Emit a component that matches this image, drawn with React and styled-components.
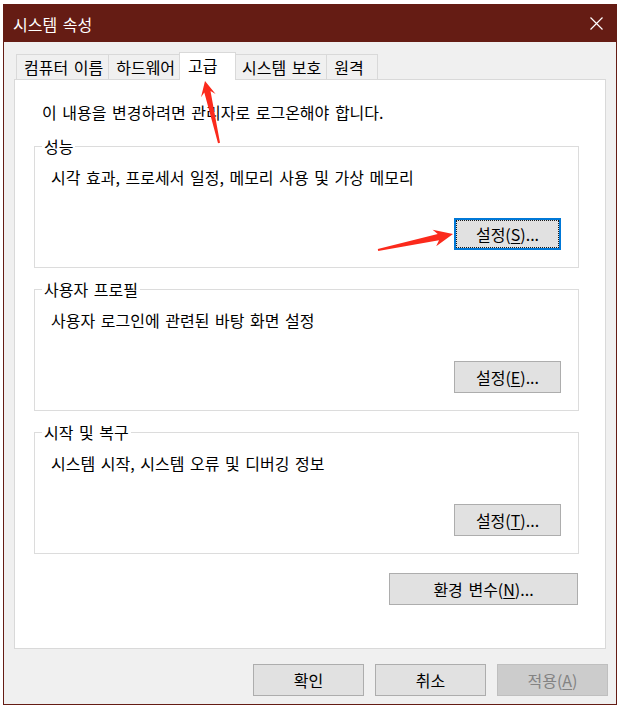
import React from 'react';
import styled, { createGlobalStyle, css } from 'styled-components';

const GlobalStyle = createGlobalStyle`
  html, body {
    margin: 0;
    padding: 0;
    background: #ffffff;
  }
  body {
    font-family: "Noto Sans CJK KR", "Noto Sans", sans-serif;
    font-size: 16px;
    color: #000000;
  }
`;

const TITLE_RED = '#651c14';

// Window frame
const Window = styled.div`
  box-sizing: border-box;
  width: 614px;
  margin: 4px 0 0 3px;
  border: 1px solid ${TITLE_RED};
  background: #f0f0f0;
`;

const TitleBar = styled.div`
  height: 37px;
  background: ${TITLE_RED};
  color: #ffffff;
  display: flex;
  align-items: center;
  justify-content: space-between;
  padding: 0 13px 0 9px;
  line-height: 20px;
  word-spacing: 2px;
`;

const CloseButton = styled.svg`
  width: 13px;
  height: 13px;
  display: block;
`;

const Body = styled.div`
  padding: 10px 10px 8px 10px;
`;

// Tabs
const TabRow = styled.div`
  display: flex;
  align-items: flex-end;
  height: 27px;
  margin-left: 2px;
  position: relative;
  z-index: 1;
`;

const Tab = styled.div`
  box-sizing: border-box;
  height: 25px;
  min-width: 52px;
  display: flex;
  align-items: center;
  padding: 0 5px 1px 7px;
  margin-left: -1px;
  border: 1px solid #d9d9d9;
  border-bottom: none;
  background: #f0f0f0;
  line-height: 20px;
  word-spacing: 2px;
  white-space: nowrap;

  &:first-child {
    margin-left: 0;
  }

  ${({ $active }) =>
    $active &&
    css`
      height: 28px;
      min-width: 57px;
      margin: 0 -1px -1px -2px;
      padding: 0 8px 3px 8px;
      background: #ffffff;
      position: relative;
      z-index: 2;
    `}
`;

const Panel = styled.div`
  box-sizing: border-box;
  height: 570px;
  background: #ffffff;
  border: 1px solid #d9d9d9;
  padding: 22px 26px 0 19px;
  display: flex;
  flex-direction: column;
`;

const Text = styled.div`
  line-height: 20px;
  word-spacing: 2px;
  white-space: nowrap;
  padding-left: ${({ $indent }) => $indent || 0}px;
`;

// Group box
const Group = styled.div`
  position: relative;
  border: 1px solid #dcdcdc;
  margin-top: ${({ $first }) => ($first ? 24 : 21)}px;
  padding: 20px 17px 17px 16px;
  display: flex;
  flex-direction: column;
`;

const GroupLabel = styled.span`
  position: absolute;
  top: -11px;
  left: 7px;
  padding: 0 2px;
  background: #ffffff;
  line-height: 20px;
  word-spacing: 2px;
`;

const ButtonRow = styled.div`
  display: flex;
  justify-content: flex-end;
  margin-top: ${({ $gap }) => $gap || 0}px;
  margin-right: ${({ $right }) => $right || 0}px;
`;

const Button = styled.button`
  box-sizing: border-box;
  position: relative;
  width: ${({ $w }) => $w}px;
  height: 32px;
  padding: 0;
  border: 1px solid #adadad;
  background: #e1e1e1;
  color: #000000;
  font-family: inherit;
  font-size: 16px;
  line-height: 20px;
  word-spacing: 2px;
  display: flex;
  align-items: center;
  justify-content: center;

  u {
    text-underline-offset: 2px;
  }

  ${({ $focused }) =>
    $focused &&
    css`
      border: 2px solid #0078d7;
      &::after {
        content: '';
        position: absolute;
        inset: 0;
        border: 1px dotted #1a1a1a;
      }
    `}

  ${({ disabled }) =>
    disabled &&
    css`
      background: #cccccc;
      border-color: #bfbfbf;
      color: #838383;
    `}
`;

const Footer = styled.div`
  display: flex;
  justify-content: flex-end;
  gap: 11px;
  margin: 15px -2px 0 0;
`;

// Red annotation arrows drawn on top of the screenshot
const Annotations = styled.svg`
  position: fixed;
  top: 0;
  left: 0;
  width: 621px;
  height: 709px;
  pointer-events: none;
  z-index: 10;
`;

function arrowPoints(x0, y0, x1, y1, head, half) {
  const dx = x1 - x0;
  const dy = y1 - y0;
  const len = Math.hypot(dx, dy);
  const ux = dx / len;
  const uy = dy / len;
  const nx = -uy;
  const ny = ux;
  const pts = [
    [0, 1],
    [len - head + 4, 3.2],
    [len - head, half],
    [len, 0],
    [len - head, -half],
    [len - head + 4, -3.2],
    [0, -1],
  ];
  return pts
    .map(([a, b]) => `${(x0 + ux * a + nx * b).toFixed(1)},${(y0 + uy * a + ny * b).toFixed(1)}`)
    .join(' ');
}

const tabs = ['컴퓨터 이름', '하드웨어', '고급', '시스템 보호', '원격'];

const groups = [
  { title: '성능', desc: '시각 효과, 프로세서 일정, 메모리 사용 및 가상 메모리', key: 'S', focused: true },
  { title: '사용자 프로필', desc: '사용자 로그인에 관련된 바탕 화면 설정', key: 'E' },
  { title: '시작 및 복구', desc: '시스템 시작, 시스템 오류 및 디버깅 정보', key: 'T' },
];

export default function App() {
  return (
    <>
      <GlobalStyle />
      <Window>
        <TitleBar>
          <span>시스템 속성</span>
          <CloseButton viewBox="0 0 13 13">
            <path d="M0.5 0.5 L12.5 12.5 M12.5 0.5 L0.5 12.5" stroke="#ffffff" strokeWidth="1.2" fill="none" />
          </CloseButton>
        </TitleBar>
        <Body>
          <TabRow>
            {tabs.map((t) => (
              <Tab key={t} $active={t === '고급'}>
                {t}
              </Tab>
            ))}
          </TabRow>
          <Panel>
            <Text $indent={8}>이 내용을 변경하려면 관리자로 로그온해야 합니다.</Text>
            {groups.map((g, i) => (
              <Group key={g.title} $first={i === 0}>
                <GroupLabel>{g.title}</GroupLabel>
                <Text>{g.desc}</Text>
                <ButtonRow $gap={31}>
                  <Button $w={107} $focused={g.focused}>
                    설정(<u>{g.key}</u>)...
                  </Button>
                </ButtonRow>
              </Group>
            ))}
            <ButtonRow $gap={19} $right={1}>
              <Button $w={189}>
                환경 변수(<u>N</u>)...
              </Button>
            </ButtonRow>
          </Panel>
          <Footer>
            <Button $w={111}>확인</Button>
            <Button $w={111}>취소</Button>
            <Button $w={111} disabled>
              적용(<u>A</u>)
            </Button>
          </Footer>
        </Body>
      </Window>
      <Annotations viewBox="0 0 621 709">
        <polygon points={arrowPoints(219, 143, 205, 81, 15, 7.5)} fill="#fb2a1c" />
        <polygon points={arrowPoints(378, 250, 453, 234, 19, 8.5)} fill="#fb2a1c" />
      </Annotations>
    </>
  );
}
